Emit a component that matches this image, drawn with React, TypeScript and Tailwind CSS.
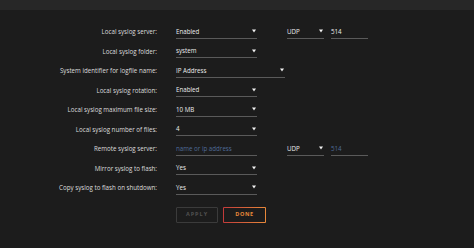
import React from 'react';

type Row = {
  label: string;
  value: string;
  width?: string;
  placeholder?: boolean;
  select?: boolean;
  proto?: { value: string; port: string; dim?: boolean };
};

const rows: Row[] = [
  { label: 'Local syslog server:', value: 'Enabled', select: true, proto: { value: 'UDP', port: '514' } },
  { label: 'Local syslog folder:', value: 'system', select: true },
  { label: 'System identifier for logfile name:', value: 'IP Address', select: true, width: 'w-[109px]' },
  { label: 'Local syslog rotation:', value: 'Enabled', select: true },
  { label: 'Local syslog maximum file size:', value: '10 MB', select: true },
  { label: 'Local syslog number of files:', value: '4', select: true },
  { label: 'Remote syslog server:', value: 'name or ip address', placeholder: true, proto: { value: 'UDP', port: '514', dim: true } },
  { label: 'Mirror syslog to flash:', value: 'Yes', select: true },
  { label: 'Copy syslog to flash on shutdown:', value: 'Yes', select: true },
];

function Caret() {
  return (
    <svg width="4" height="4" viewBox="0 0 4 4" className="shrink-0">
      <path d="M0 0.5 L4 0.5 L2 3.5 Z" fill="#f2f2f2" />
    </svg>
  );
}

function Field({ value, width, select, placeholder }: { value: string; width: string; select?: boolean; placeholder?: boolean }) {
  return (
    <div className={`${width} h-[14px] flex items-center justify-between border-b border-[#5a5a5a] pr-[1px]`}>
      <span className={placeholder ? 'text-[#4f6b98]' : 'text-[#ececec]'}>{value}</span>
      {select && <Caret />}
    </div>
  );
}

export default function App() {
  return (
    <div
      className="w-[474px] h-[248px] bg-[#1c1c1c] overflow-hidden text-[6.2px]"
      style={{ fontFamily: '"Open Sans", "Noto Sans", sans-serif' }}
    >
      <div className="h-[10px] bg-[#272727]" />
      <div className="pt-[12px]">
        {rows.map((r) => (
          <div key={r.label} className="h-[19.5px] flex items-center">
            <div className="w-[157px] text-right text-[#dcdcdc]">{r.label}</div>
            <div className="ml-[19px]">
              <Field value={r.value} width={r.width ?? 'w-[81px]'} select={r.select} placeholder={r.placeholder} />
            </div>
            {r.proto && (
              <div className="ml-[30px] flex gap-[7px]">
                <Field value={r.proto.value} width="w-[37px]" select />
                <Field value={r.proto.port} width="w-[37px]" placeholder={r.proto.dim} />
              </div>
            )}
          </div>
        ))}
        <div className="mt-[9px] ml-[176px] flex gap-[5px]">
          <button className="w-[42px] h-[16px] border border-[#3b3b3b] rounded-[1px] text-[#505050] font-bold tracking-[1px] text-[5.5px]">
            APPLY
          </button>
          <button
            className="w-[43px] h-[16px] rounded-[1px] text-[#e8893a] font-bold tracking-[0.6px] text-[5.5px] border border-transparent"
            style={{
              background:
                'linear-gradient(#1c1c1c,#1c1c1c) padding-box, linear-gradient(90deg,#c23a3a,#e8893a) border-box',
            }}
          >
            DONE
          </button>
        </div>
      </div>
    </div>
  );
}
